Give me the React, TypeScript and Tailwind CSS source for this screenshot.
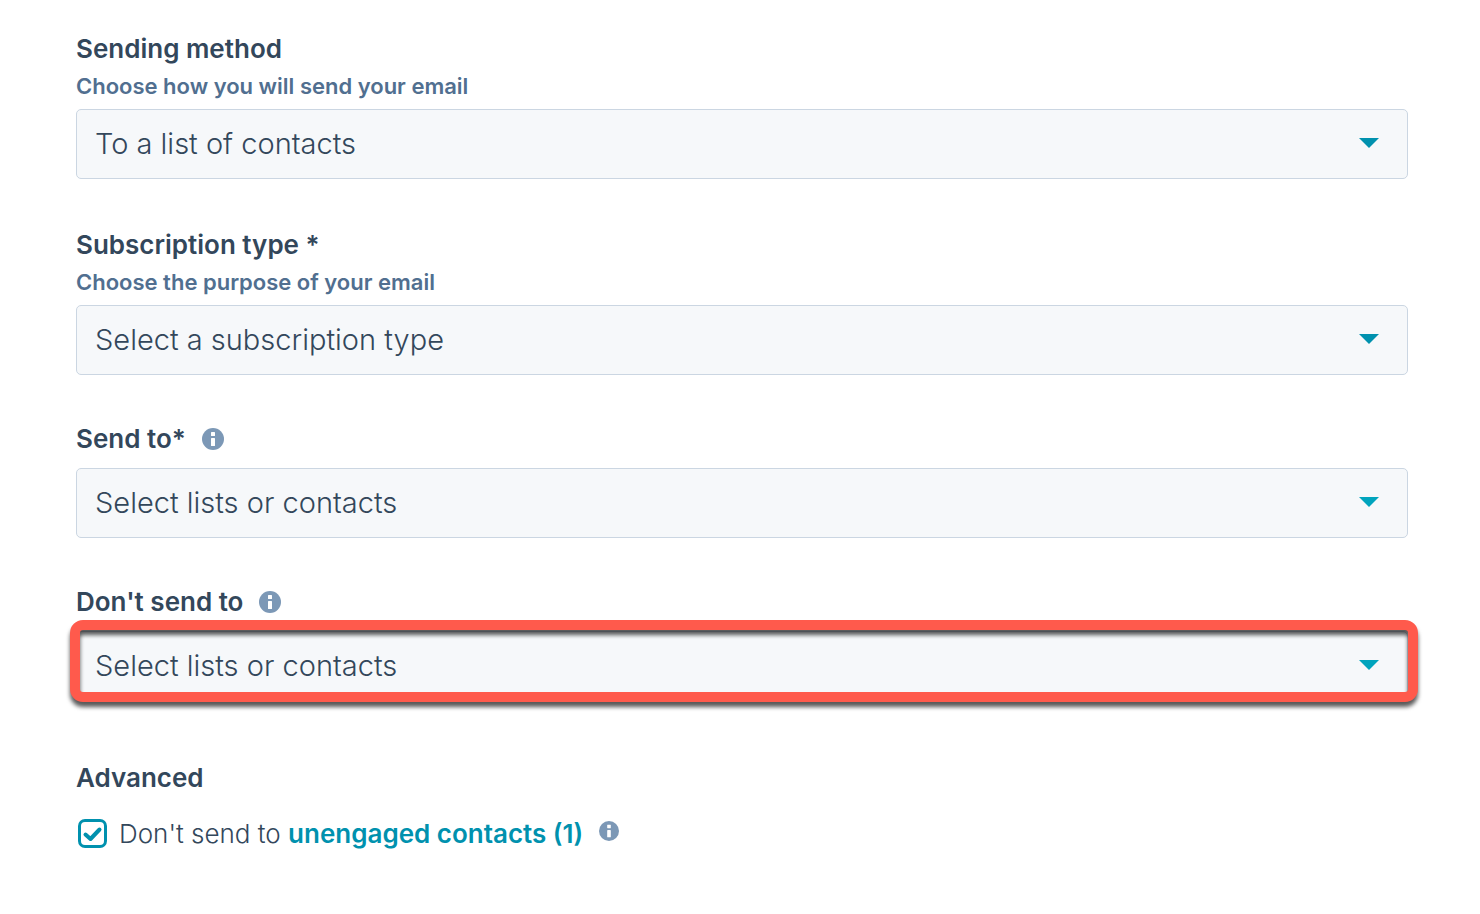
import { useState } from 'react'
import type { ReactNode } from 'react'

type FieldProps = {
  id: string
  label: string
  description?: string
  info?: boolean
  options: string[]
  highlighted?: boolean
}

function InfoIcon({ className }: { className?: string }) {
  return (
    <svg viewBox="0 0 22 22" className={className} aria-hidden="true">
      <circle cx="11" cy="11" r="11" fill="#7c98b6" />
      <rect x="9" y="4" width="4" height="4" rx="0.5" fill="#fff" />
      <rect x="9" y="10" width="4" height="8" rx="0.5" fill="#fff" />
    </svg>
  )
}

function InfoButton({ label, children }: { label: string; children: ReactNode }) {
  return (
    <button type="button" aria-label={label} className="cursor-pointer">
      {children}
    </button>
  )
}

function SelectField({ id, label, description, info, options, highlighted }: FieldProps) {
  return (
    <div>
      {description ? (
        <label htmlFor={id} className="mb-1.5 block">
          <span className="block text-[26px] leading-10 font-semibold text-[#33475b]">{label}</span>
          <span className="block text-[22px] leading-[34px] font-semibold text-[#516f90]">{description}</span>
        </label>
      ) : (
        <div className="mb-[11px] flex h-9 items-center gap-4">
          <label htmlFor={id} className="text-[26px] leading-9 font-semibold text-[#33475b]">{label}</label>
          {info && (
            <InfoButton label={`About ${label}`}>
              <InfoIcon className="size-[22px]" />
            </InfoButton>
          )}
        </div>
      )}

      <div className="relative">
        <select
          id={id}
          className="block h-[70px] w-full cursor-pointer appearance-none rounded-[5px] border border-[#cbd6e2] bg-[#f6f8fa] pr-16 pl-[18px] text-[29px] font-light text-[#33475b]"
        >
          {options.map((option) => (
            <option key={option}>{option}</option>
          ))}
        </select>
        <svg viewBox="0 0 20 10" className="pointer-events-none absolute top-[29px] right-[29px] h-2.5 w-5" aria-hidden="true">
          <path d="M0 0h20L10 10z" fill={info ? '#00a4bd' : '#0091ae'} />
        </svg>
        {highlighted && (
          <div className="pointer-events-none absolute -top-[11px] -right-[10px] -bottom-px -left-[6px] rounded-[13px] border-10 border-[#ff5a4c] drop-shadow-[0_5px_2px_rgba(0,0,0,0.65)]" />
        )}
      </div>
    </div>
  )
}

export default function App() {
  const [excludeUnengaged, setExcludeUnengaged] = useState(true)

  return (
    <main className="min-h-screen bg-white pt-[29px] pr-18 pb-14 pl-19 font-['Inter',sans-serif]">
      <form>
        <div className="flex flex-col gap-[46px]">
          <SelectField
            id="sending-method"
            label="Sending method"
            description="Choose how you will send your email"
            options={['To a list of contacts']}
          />
          <SelectField
            id="subscription-type"
            label="Subscription type *"
            description="Choose the purpose of your email"
            options={['Select a subscription type']}
          />
          <SelectField id="send-to" label="Send to*" info options={['Select lists or contacts']} />
          <SelectField id="dont-send-to" label="Don't send to" info options={['Select lists or contacts']} highlighted />
        </div>

        <h2 className="mt-[59px] text-[26px] leading-9 font-semibold text-[#33475b]">Advanced</h2>

        <div className="mt-5 flex items-center">
          <div className="relative ml-0.5 size-[29px]">
            <input
              id="unengaged"
              type="checkbox"
              checked={excludeUnengaged}
              onChange={(e) => setExcludeUnengaged(e.target.checked)}
              className="block size-full cursor-pointer appearance-none rounded-[7px] border-3 border-[#0091ae] bg-white"
            />
            {excludeUnengaged && (
              <svg viewBox="0 0 29 29" className="pointer-events-none absolute inset-0" fill="none" aria-hidden="true">
                <path d="M7.5 15.5l5 4.5 9-9.5" stroke="#0091ae" strokeWidth="4" strokeLinecap="round" strokeLinejoin="round" />
              </svg>
            )}
          </div>
          <div className="ml-3 pt-0.5 text-[26px] leading-8 font-light text-[#33475b]">
            <label htmlFor="unengaged">Don't send to</label>{' '}
            <a href="#unengaged-contacts" className="font-semibold text-[#0091ae]">unengaged contacts (1)</a>
          </div>
          <div className="mb-1 ml-4 flex">
            <InfoButton label="About unengaged contacts">
              <InfoIcon className="size-5" />
            </InfoButton>
          </div>
        </div>
      </form>
    </main>
  )
}
